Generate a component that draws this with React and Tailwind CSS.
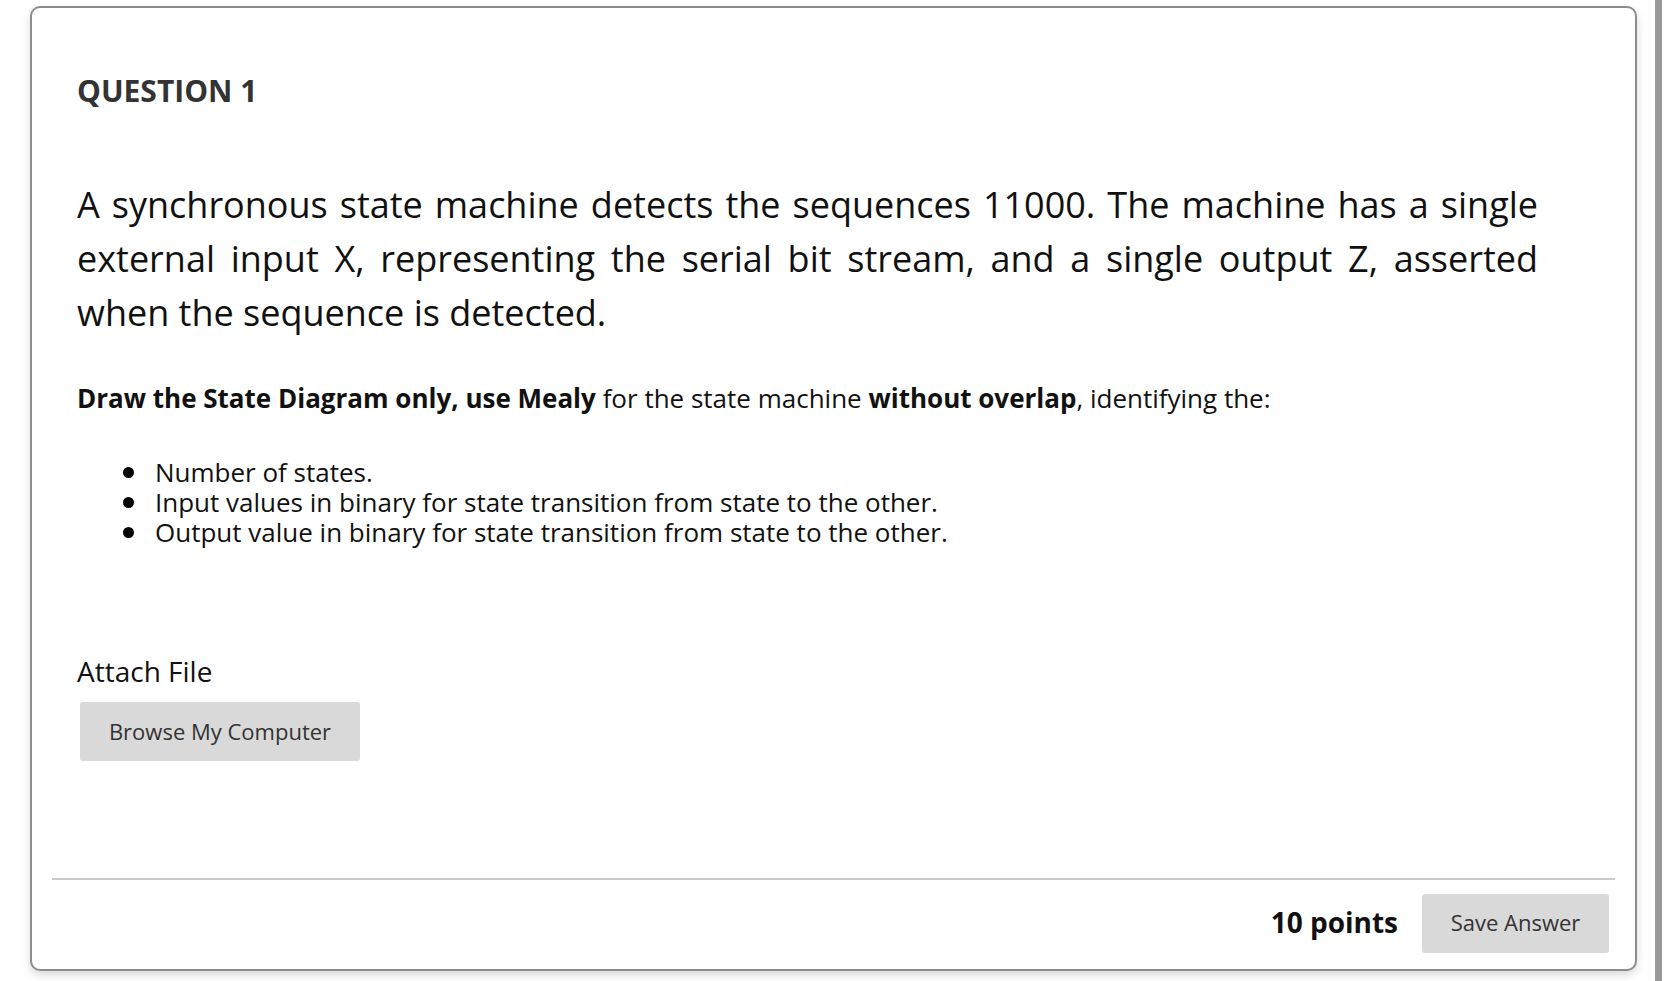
export default function App() {
  const items = [
    "Number of states.",
    "Input values in binary for state transition from state to the other.",
    "Output value in binary for state transition from state to the other.",
  ];

  return (
    <div className="flex h-[981px] w-full bg-white font-['Open_Sans',sans-serif]">
      <div className="pl-[30px] pt-[6px]">
        <div className="flex h-[965px] w-[1607px] flex-col rounded-[10px] border-2 border-[#8c8c8c] bg-white shadow-[0_4px_8px_rgba(0,0,0,0.15)]">
          <div className="pl-[45px] pr-[97px] pt-[65px]">
            <h2 className="text-[30px] font-bold leading-[36px] text-[#333]">
              QUESTION 1
            </h2>

            <p className="mt-[69px] text-justify text-[36px] leading-[54px] text-[#111]">
              A synchronous state machine detects the sequences 11000. The
              machine has a single external input X, representing the serial
              bit stream, and a single output Z, asserted when the sequence is
              detected.
            </p>

            <p className="mt-[42px] text-[26px] leading-[32px] text-[#111]">
              <span className="font-bold">
                Draw the State Diagram only, use Mealy
              </span>{" "}
              for the state machine{" "}
              <span className="font-bold">without overlap</span>, identifying
              the:
            </p>

            <ul className="mt-[43px] pl-[46px]">
              {items.map((item, index) => (
                <li
                  key={index}
                  className="flex items-center text-[26px] leading-[30px] text-[#111]"
                >
                  <span className="mr-[21px] h-[11px] w-[11px] rounded-full bg-black" />
                  {item}
                </li>
              ))}
            </ul>

            <div className="mt-[107px] text-[28px] leading-[34px] text-[#111]">
              Attach File
            </div>
            <button className="ml-[3px] mt-[14px] flex h-[59px] w-[280px] items-center justify-center rounded-[3px] bg-[#d9d9d9] text-[22px] text-[#333]">
              Browse My Computer
            </button>
          </div>

          <div className="mx-[20px] mt-auto flex items-center justify-end gap-6 border-t-2 border-[#cbcbcb] pb-[16px] pr-[6px] pt-[14px]">
            <span className="-mt-[4px] text-[28px] font-bold text-[#111]">
              10 points
            </span>
            <button className="flex h-[59px] w-[187px] items-center justify-center rounded-[3px] bg-[#d9d9d9] pb-[3px] text-[22px] text-[#333]">
              Save Answer
            </button>
          </div>
        </div>
      </div>
      <div className="ml-[18px] w-[7px] bg-[#999]" />
    </div>
  );
}
